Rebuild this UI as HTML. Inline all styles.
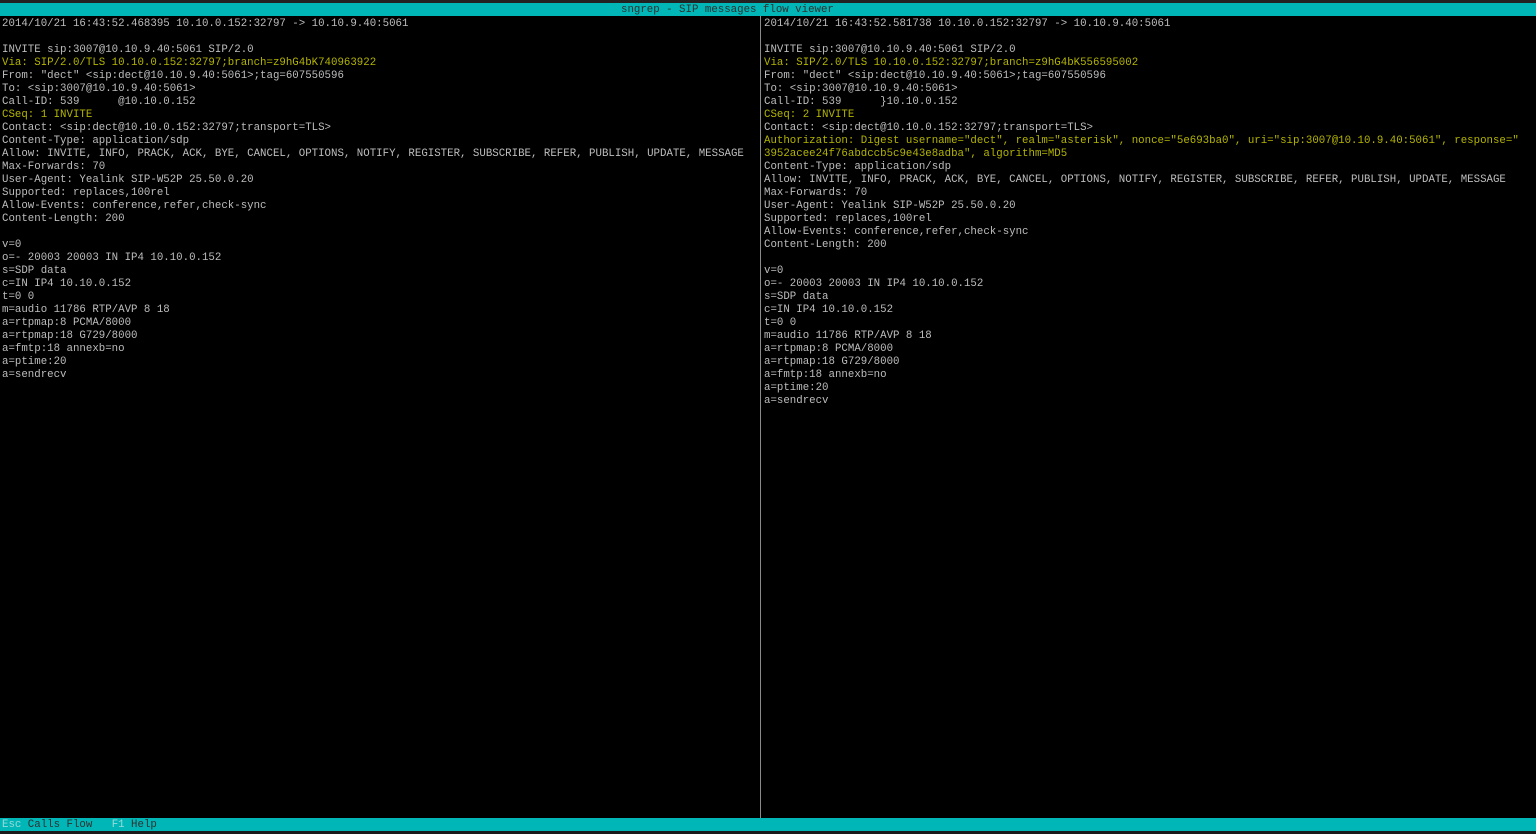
<!DOCTYPE html>
<html><head><meta charset="utf-8"><style>
html,body{margin:0;padding:0;background:#000;width:1536px;height:834px;overflow:hidden;position:relative}
pre{margin:0;font-family:"Liberation Mono","DejaVu Sans Mono",monospace;font-size:10.75px;line-height:13px;color:#bdbdbd;position:absolute;white-space:pre}
.y{color:#b4b400}
.bar{position:absolute;left:0;width:1536px;background:#00b6b6;height:13px}
.top{top:3px}
.bot{top:818px}
.div{position:absolute;left:760px;top:16px;width:1px;height:802px;background:#8a8a8a}
.ttl{top:4px;left:621px;color:#303030}
.ft{top:819px;left:2px;color:#303030}
.ft b{font-weight:normal;color:#9adada}
</style></head><body>
<div style="position:absolute;top:0;left:0;width:1536px;height:3px;background:#222"></div>
<div class="bar top"></div>
<pre class="ttl">sngrep - SIP messages flow viewer</pre>
<div class="div"></div>
<pre style="left:2px;top:18px">2014/10/21 16:43:52.468395 10.10.0.152:32797 -> 10.10.9.40:5061

INVITE sip:3007@10.10.9.40:5061 SIP/2.0
<span class="y">Via: SIP/2.0/TLS 10.10.0.152:32797;branch=z9hG4bK740963922</span>
From: "dect" &lt;sip:dect@10.10.9.40:5061&gt;;tag=607550596
To: &lt;sip:3007@10.10.9.40:5061&gt;
Call-ID: 539      @10.10.0.152
<span class="y">CSeq: 1 INVITE</span>
Contact: &lt;sip:dect@10.10.0.152:32797;transport=TLS&gt;
Content-Type: application/sdp
Allow: INVITE, INFO, PRACK, ACK, BYE, CANCEL, OPTIONS, NOTIFY, REGISTER, SUBSCRIBE, REFER, PUBLISH, UPDATE, MESSAGE
Max-Forwards: 70
User-Agent: Yealink SIP-W52P 25.50.0.20
Supported: replaces,100rel
Allow-Events: conference,refer,check-sync
Content-Length: 200

v=0
o=- 20003 20003 IN IP4 10.10.0.152
s=SDP data
c=IN IP4 10.10.0.152
t=0 0
m=audio 11786 RTP/AVP 8 18
a=rtpmap:8 PCMA/8000
a=rtpmap:18 G729/8000
a=fmtp:18 annexb=no
a=ptime:20
a=sendrecv</pre>
<pre style="left:764px;top:18px">2014/10/21 16:43:52.581738 10.10.0.152:32797 -> 10.10.9.40:5061

INVITE sip:3007@10.10.9.40:5061 SIP/2.0
<span class="y">Via: SIP/2.0/TLS 10.10.0.152:32797;branch=z9hG4bK556595002</span>
From: "dect" &lt;sip:dect@10.10.9.40:5061&gt;;tag=607550596
To: &lt;sip:3007@10.10.9.40:5061&gt;
Call-ID: 539      }10.10.0.152
<span class="y">CSeq: 2 INVITE</span>
Contact: &lt;sip:dect@10.10.0.152:32797;transport=TLS&gt;
<span class="y">Authorization: Digest username="dect", realm="asterisk", nonce="5e693ba0", uri="sip:3007@10.10.9.40:5061", response="
3952acee24f76abdccb5c9e43e8adba", algorithm=MD5</span>
Content-Type: application/sdp
Allow: INVITE, INFO, PRACK, ACK, BYE, CANCEL, OPTIONS, NOTIFY, REGISTER, SUBSCRIBE, REFER, PUBLISH, UPDATE, MESSAGE
Max-Forwards: 70
User-Agent: Yealink SIP-W52P 25.50.0.20
Supported: replaces,100rel
Allow-Events: conference,refer,check-sync
Content-Length: 200

v=0
o=- 20003 20003 IN IP4 10.10.0.152
s=SDP data
c=IN IP4 10.10.0.152
t=0 0
m=audio 11786 RTP/AVP 8 18
a=rtpmap:8 PCMA/8000
a=rtpmap:18 G729/8000
a=fmtp:18 annexb=no
a=ptime:20
a=sendrecv</pre>
<div class="bar bot"></div>
<pre class="ft"><b>Esc</b> Calls Flow   <b>F1</b> Help</pre>
<div style="position:absolute;top:831px;left:0;width:1536px;height:3px;background:#1a1a1a"></div>
</body></html>
